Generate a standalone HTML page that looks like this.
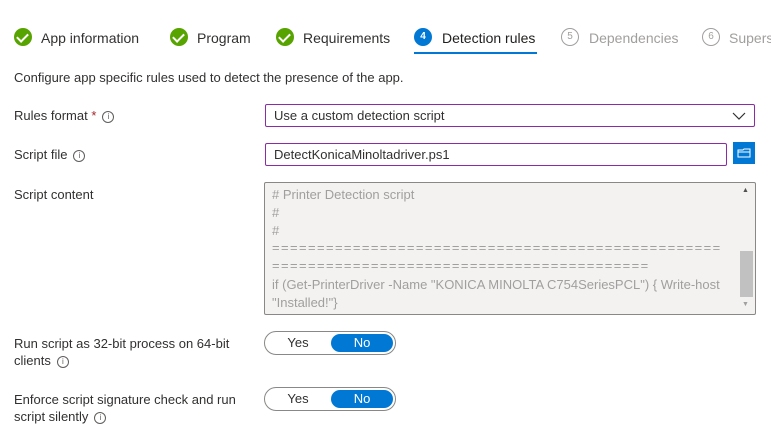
<!DOCTYPE html>
<html style="overflow:hidden"><head><style>
*{margin:0;padding:0;box-sizing:border-box}
html,body{width:771px;height:437px;overflow:hidden}
body{background:#fff;font-family:"Liberation Sans",sans-serif;font-size:13px;color:#323130;position:relative}
.a{position:absolute;white-space:nowrap}
.tab{font-size:14px;top:30px}
.chk{position:absolute;top:28px;width:18px;height:18px;border-radius:50%;background:#57a300}
.chk:after{content:"";position:absolute;left:5px;top:3px;width:5px;height:9px;border:solid #fff;border-width:0 2px 2px 0;transform:rotate(45deg)}
.num{position:absolute;top:28px;width:18px;height:18px;border-radius:50%;border:1px solid #a19f9d;color:#a19f9d;font-size:10px;text-align:center;line-height:16px}
.info{display:inline-block;width:12px;height:12px;border:1px solid #605e5c;border-radius:50%;font-size:8px;line-height:10px;text-align:center;color:#605e5c;vertical-align:middle;margin-left:6px}
.box{position:absolute;border:1px solid #8a2da5;border-radius:2px;padding-left:8px;line-height:21px}
.tog{position:absolute;left:264px;width:132px;height:24px;border:1px solid #8a8886;border-radius:12px}
.tog .y{position:absolute;left:0;width:66px;text-align:center;line-height:22px}
.tog .n{position:absolute;left:66px;top:2px;width:62px;height:18px;border-radius:9px;background:#0078d4;color:#fff;text-align:center;line-height:18px}
.code{position:absolute;left:272px;color:#a19f9d;font-size:13px}
</style></head><body>
<div class="chk" style="left:14px"></div><div class="a tab" style="left:41px">App information</div>
<div class="chk" style="left:170px"></div><div class="a tab" style="left:197px">Program</div>
<div class="chk" style="left:276px"></div><div class="a tab" style="left:303px">Requirements</div>
<div class="num" style="left:414px;background:#0078d4;border-color:#0078d4;color:#fff;font-weight:bold">4</div>
<div class="a tab" style="left:442px;color:#201f1e">Detection rules</div>
<div class="a" style="left:414px;top:52px;width:123px;height:2px;background:#0078d4"></div>
<div class="num" style="left:561px">5</div><div class="a tab" style="left:589px;color:#a19f9d">Dependencies</div>
<div class="num" style="left:702px">6</div><div class="a tab" style="left:729px;color:#a19f9d">Supers</div>

<div class="a" style="left:14px;top:70px">Configure app specific rules used to detect the presence of the app.</div>
<div class="a" style="left:14px;top:108px">Rules format <span style="color:#a4262c">*</span><span class="info">i</span></div>
<div class="box" style="left:265px;top:104px;width:490px;height:23px">Use a custom detection script
<svg style="position:absolute;right:8px;top:7px" width="14" height="9"><path d="M1 1 L7 7 L13 1" fill="none" stroke="#323130" stroke-width="1.2"/></svg></div>
<div class="a" style="left:14px;top:147px">Script file<span class="info">i</span></div>
<div class="box" style="left:265px;top:143px;width:462px;height:23px">DetectKonicaMinoltadriver.ps1</div>
<div class="a" style="left:733px;top:142px;width:22px;height:22px;background:#0078d4">
<svg width="22" height="22"><path d="M5 8 H10 L11 7 H17 V15 H5 Z M5 10 H17" fill="none" stroke="#fff" stroke-width="1"/></svg></div>
<div class="a" style="left:14px;top:187px">Script content</div>
<div class="a" style="left:264px;top:182px;width:492px;height:133px;background:#f3f2f1;border:1px solid #8a8886;border-radius:2px"></div>
<div class="a" style="left:740px;top:251px;width:13px;height:46px;background:#c1c1c1"></div>
<div class="a" style="left:742px;top:187px;font-size:7px;color:#505050">▲</div>
<div class="a" style="left:742px;top:301px;font-size:7px;color:#a0a0a0">▼</div>
<div class="code" style="top:187px">#&nbsp;Printer Detection script</div>
<div class="code" style="top:205px">#</div>
<div class="code" style="top:223px">#</div>
<div class="code" style="top:240px;letter-spacing:1.4px">==================================================</div>
<div class="code" style="top:258px;letter-spacing:1.4px">==========================================</div>
<div class="code" style="top:277px">if (Get-PrinterDriver -Name "KONICA MINOLTA C754SeriesPCL") { Write-host</div>
<div class="code" style="top:295px">"Installed!"}</div>

<div class="a" style="left:14px;top:336px">Run script as 32-bit process on 64-bit</div>
<div class="a" style="left:14px;top:353px">clients<span class="info">i</span></div>
<div class="tog" style="top:331px"><span class="y">Yes</span><span class="n">No</span></div>
<div class="a" style="left:14px;top:392px">Enforce script signature check and run</div>
<div class="a" style="left:14px;top:409px">script silently<span class="info">i</span></div>
<div class="tog" style="top:387px"><span class="y">Yes</span><span class="n">No</span></div>
</body></html>
